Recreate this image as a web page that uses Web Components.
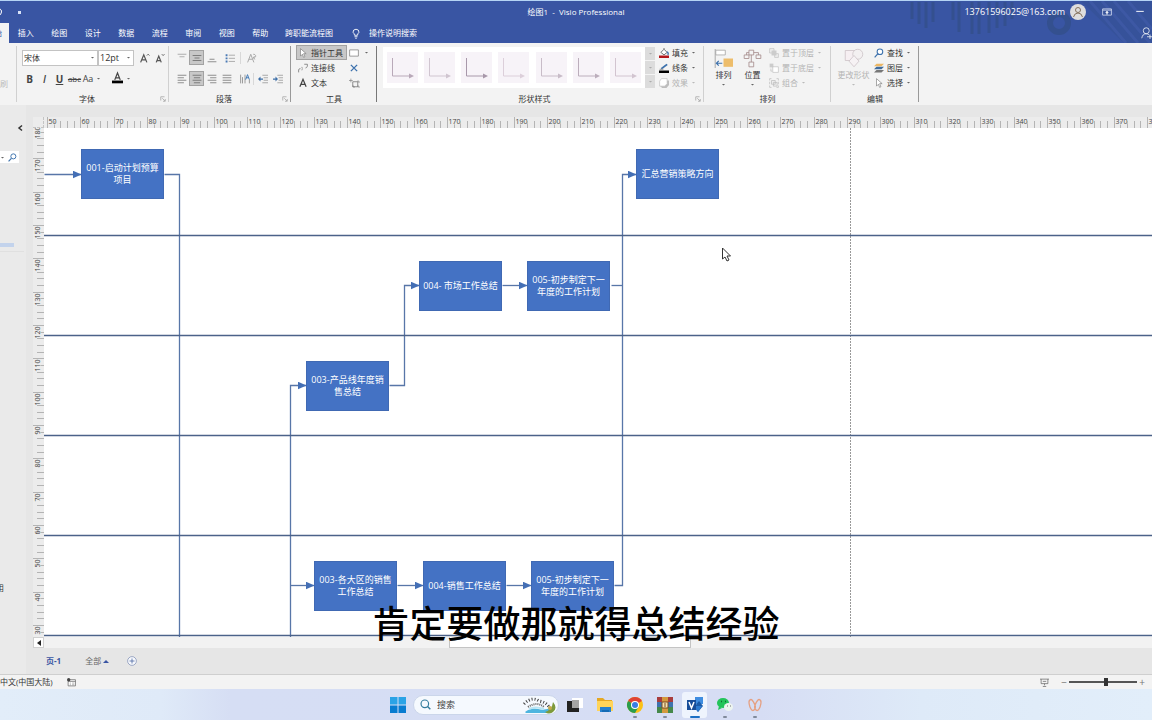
<!DOCTYPE html>
<html lang="zh-CN">
<head>
<meta charset="utf-8">
<title>绘图1 - Visio Professional</title>
<style>
  html, body { margin: 0; height: 100%; overflow: hidden; }
  body {
    font-family: "Open Sans", "Noto Sans CJK SC", sans-serif;
    font-size: 8px;
    line-height: 12px;
    color: #333;
    background: #e6e6e6;
  }
</style>
</head>
<body>
<visio-app></visio-app>

<script>
// ------------------------------------------------------------
// Icons, all drawn on a 16x16 grid
// ------------------------------------------------------------
const ICONS = {
  caret: '<path d="M3 6h10l-5 5z" fill="#666"/>',
  launcher: '<path d="M2 12V2h10M6 6l7 7M14 8v6H8" fill="none" stroke="#888" stroke-width="1.5"/>',
  growA: '<path d="M1 15L6 3l5 12M3 11h6" fill="none" stroke="#555" stroke-width="2"/><path d="M11 4l2-2 2 2" fill="none" stroke="#444" stroke-width="1.4"/>',
  shrinkA: '<path d="M2 15L6 5l4 10M3 12h6" fill="none" stroke="#555" stroke-width="2"/><path d="M11 2l2 2 2-2" fill="none" stroke="#444" stroke-width="1.4"/>',
  fontColor: '<path d="M4 10L8 0l4 10M5 7h6" fill="none" stroke="#444" stroke-width="1.800"/><path d="M0 11h16v4H0z" fill="#000"/>',
  top: '<path d="M1 2h14M4 6h8" stroke="#aaa" stroke-width="1.5"/>',
  middle: '<path d="M1 4h14M4 8h8M1 12h14" stroke="#777" stroke-width="1.5"/>',
  bottom: '<path d="M4 10h8M1 14h14" stroke="#888" stroke-width="1.5"/>',
  bullets: '<path d="M1 2h3v3H1zM1 7h3v3H1zM1 12h3v3H1z" fill="#4a7ab5"/><path d="M6 3.500h10M6 8.500h10M6 13.500h10" stroke="#aaa" stroke-width="1.500"/>',
  rotateA: '<path d="M1 15L6 2l5 13M3 10h6" fill="none" stroke="#aaa" stroke-width="1.600"/><path d="M10 2c5 0 5 5 1 6M12 5l-2 3 3 2" fill="none" stroke="#999" stroke-width="1.300"/>',
  alignLeft: '<path d="M1 2h14M1 6h10M1 10h14M1 14h10" stroke="#888" stroke-width="1.500"/>',
  alignCenter: '<path d="M1 2h14M3 6h10M1 10h14M3 14h10" stroke="#777" stroke-width="1.500"/>',
  alignRight: '<path d="M1 2h14M5 6h10M1 10h14M5 14h10" stroke="#888" stroke-width="1.500"/>',
  justify: '<path d="M1 2h14M1 6h14M1 10h14M1 14h14" stroke="#888" stroke-width="1.500"/>',
  vertical: '<path d="M1 1v14M4 5v10M8 1v14M15 9v6" stroke="#888" stroke-width="1.300"/><path d="M9 9l3-8 3 8M10 6h4" fill="none" stroke="#3f77b5" stroke-width="1.500"/>',
  outdent: '<path d="M7 2h9M9 6h7M9 10h7M7 14h9" stroke="#999" stroke-width="1.300"/><path d="M0 8l4-4v3h4v2H4v3z" fill="#3d6fa8"/>',
  indent: '<path d="M7 2h9M9 6h7M9 10h7M7 14h9" stroke="#999" stroke-width="1.300"/><path d="M8 8L4 4v3H0v2h4v3z" fill="#3d6fa8"/>',
  pointer: '<path d="M4 1v12l3-3 2 5 2-1-2-5h4z" fill="#fff" stroke="#777"/>',
  connector: '<path d="M1 15v-4q0-2 3-2M10 2h5v3q-1 3-3 3" fill="none" stroke="#777" stroke-width="1.300"/><path d="M5 7h2v4H5" fill="none" stroke="#999"/>',
  text: '<path d="M3 14L8 2l5 12M5 10h6" fill="none" stroke="#444" stroke-width="2"/>',
  rect: '<path d="M1 3h14v10H1z" fill="#fff" stroke="#888" stroke-width="1.300"/>',
  cross: '<path d="M3 3l10 10M13 3L3 13" stroke="#3d72ad" stroke-width="2.200"/>',
  point: '<path d="M6 6h8v8H6z" fill="none" stroke="#777" stroke-width="1.300"/><path d="M3 1v6M0 4h6M5 13h3v3M13 5h3v3M13 13h3v3" fill="none" stroke="#777"/>',
  fill: '<path d="M3 7l5-5 5 5-5 4zM8 2V0" fill="#fff" stroke="#555" stroke-width="1.300"/><path d="M13 6q3 3 1 5" stroke="#3d72ad" stroke-width="2" fill="none"/><path d="M0 12h16v4H0z" fill="#b3161b"/>',
  line: '<path d="M3 10l1-3 8-6 2 2-8 6z" fill="#3d72ad"/><path d="M1 10h6" stroke="#555"/><path d="M0 12h16v4H0z" fill="#000"/>',
  effect: '<path d="M6 4h10v7l-4 5H5l-3-3z" fill="#bdbdbd"/><path d="M4 1h9v8l-4 4H1V5z" fill="#fff" stroke="#bbb"/>',
  front: '<path d="M1 1h7v7H1zM9 9h6v6H9z" fill="#eee" stroke="#bbb"/><path d="M4 4h8v8H4z" fill="#ccc"/>',
  back: '<path d="M1 1h6v6H1z" fill="#ccc"/><path d="M6 6h9v9H6z" fill="#fff" stroke="#bbb"/><path d="M3 9v4h2" fill="none" stroke="#bbb"/>',
  group: '<path d="M4 4h6v6H4zM7 7h6v6H7z" fill="#eee" stroke="#b5b5b5"/><path d="M1 4V1h3M12 1h3v3M15 12v3h-3M4 15H1v-3M1 6v4M15 6v4" fill="none" stroke="#b5b5b5"/>',
  find: '<circle cx="9.500" cy="6" r="4.500" fill="#fff" stroke="#3d72ad" stroke-width="1.700"/><path d="M6 9.500L1 15" stroke="#3d72ad" stroke-width="2"/>',
  layer: '<path d="M4 1h12l-4 4H0z" fill="#ecb765"/><path d="M4 6h12l-4 4H0z" fill="#3f6b9d"/><path d="M4 11h12l-4 4H0z" fill="#777"/>',
  bigArrange: '<path d="M1 0v16" stroke="#999" stroke-width=".7"/><path d="M1.500 1h8v4h-8z" fill="#fff" stroke="#999" stroke-width=".6"/><path d="M8 8h8v7H8z" fill="#edbd6b"/><path d="M7 12H2m2-2l-2 2 2 2" fill="none" stroke="#3d72ad"/>',
  bigPosition: '<path d="M5 1h4v4H5zM11 5h4v3h-4zM1 5h4v3H1zM5 11h4v4H5zM9 3h4v2M7 5v6M3 5V3h2" fill="none" stroke="#a58c8c" stroke-width=".7"/>',
  bigShape: '<path d="M1 2h8v8H1z" fill="#f6eff2" stroke="#c9bfc4" stroke-width=".6"/><circle cx="11" cy="5" r="4" fill="#f3f0f1" stroke="#c9c0c4" stroke-width=".6"/><path d="M8 6l4 4.500L8 15l-4-4.500z" fill="#f6f2f4" stroke="#c9bfc4" stroke-width=".6"/>',
  bulb: '<path d="M6 11q0-2-2-4a4 4 0 1 1 8 0q-2 2-2 4zM6 13h4M7 15h2" fill="none" stroke="#fff" stroke-width="1.200"/>',
  undo: '<path d="M3 2h6M3 2v5M3 5q9-5 9 3 0 5-6 6" fill="none" stroke="#fff" stroke-width="1.600"/>',
  user: '<circle cx="8" cy="8" r="8" fill="#dedede"/><circle cx="8" cy="6" r="2.500" fill="none" stroke="#85725d"/><path d="M3.500 13q1-4 4.500-4t4.500 4" fill="none" stroke="#85725d"/>',
  display: '<path d="M1 3h14v10H1zM1 5h14" fill="none" stroke="#dfe6f7" stroke-width="1.200"/><path d="M8 6l3 3H9v3H7V9H5z" fill="#fff"/>',
  minimize: '<path d="M2 7h12" stroke="#fff" stroke-width="1.500"/>',
  share: '<circle cx="7" cy="5" r="4" fill="none" stroke="#fff"/><path d="M1 15q1-6 6-6 3 0 4 2M8 13h7M12 10v6" fill="none" stroke="#fff"/>',
  collapse: '<path d="M12 3L6 8l6 5" fill="none" stroke="#333" stroke-width="3"/>',
  addPage: '<circle cx="8" cy="8" r="7" fill="#f6f8fc" stroke="#6d7fab"/><path d="M8 4v8M4 8h8" stroke="#46609f" stroke-width="1.200"/>',
  macro: '<path d="M2 3h13v11H2zM2 6h13" fill="#fff" stroke="#666" stroke-width="1.300"/><path d="M5 9h2M9 9h4M5 12h2M9 12h4" stroke="#777"/><circle cx="3" cy="3" r="3" fill="#444"/>',
  present: '<path d="M0 2h16M2 2v8h12V2M5 6h6M8 10v3M5 15h6" fill="none" stroke="#666" stroke-width="1.300"/>',
  // task bar
  windows: '<path d="M0 0h7.500v7.500H0zM8.500 0H16v7.500H8.500z" fill="#2ba3e6"/><path d="M0 8.500h7.500V16H0zM8.500 8.500H16V16H8.500z" fill="#087cd0"/>',
  taskview: '<path d="M5 1h11v10H5z" fill="#fff"/><path d="M0 4h12v11H0z" fill="#222"/><path d="M5 3h7v8H5z" fill="#a5a5a5"/>',
  folder: '<path d="M0 1h6l2 2h7v11H0z" fill="#e5a823"/><path d="M0 4h16v10H0z" fill="#ffd45a"/><path d="M3 10h11v5H3z" fill="#2480cf"/><path d="M5 13h7v2H5z" fill="#146bb5"/>',
  chrome: '<circle cx="8" cy="8" r="8" fill="#fbc116"/><path d="M8 8L1.070 4A8 8 0 0 1 14.930 4z" fill="#df4335"/><path d="M8 8l-6.930-4A8 8 0 0 0 8 16l3.500-6z" fill="#2a9d4d"/><circle cx="8" cy="8" r="4" fill="#fff"/><circle cx="8" cy="8" r="3" fill="#397de4"/>',
  rar: '<path d="M0 0h16v5H0z" fill="#a83d3d"/><path d="M0 5h16v5H0z" fill="#3e72ae"/><path d="M0 10h16v6H0z" fill="#45884a"/><path d="M5 0h6v16H5z" fill="#d39a3e"/><path d="M5 5h6v6H5z" fill="#f4e2ac" stroke="#7a4b23"/><path d="M8 6v4" stroke="#7a4b23"/>',
  visio: '<path d="M8 0h8v7H8z" fill="#3f8de0"/><path d="M12 4l4 5-5 6-4-5z" fill="#195aa8"/><path d="M7 9h8l-4 6z" fill="#2b79cf"/><path d="M0 3h9v10H0z" fill="#174d98"/><path d="M2 5l2.500 6L7 5" fill="none" stroke="#fff" stroke-width="1.500"/>',
  wechat: '<ellipse cx="6" cy="6" rx="6" ry="5" fill="#23c45a"/><path d="M2 9l-1 4 4-2z" fill="#23c45a"/><ellipse cx="11.500" cy="10" rx="4.500" ry="4" fill="#edf5f0"/><path d="M4 4.500h1M8 4.500h1" stroke="#126a32" stroke-width="1.400"/><path d="M10 9h1M13 9h1" stroke="#777"/>',
  wings: '<path d="M8 8Q5 1 3 3q-2 1 0 7 2 5 4 3 2-2 1-5Q11 1 13 3q2 1 0 7-2 5-4 3-2-2-1-5z" fill="none" stroke="#e5a184" stroke-width="1.400"/>',
  lens: '<circle cx="7" cy="7" r="5.500" fill="none" stroke="#337c9c" stroke-width="1.700"/><path d="M11 11l4 4" stroke="#337c9c" stroke-width="2"/>'
};

// Base class: attaches an open shadow root and fills it once connected
class BaseElement extends HTMLElement {
  constructor() {
    super();
    this.attachShadow({ mode: 'open' });
  }
  connectedCallback() {
    this.shadowRoot.innerHTML = `
      <style>
        *, *::before, *::after { box-sizing: border-box; }
        button, input, select { font: inherit; color: inherit; margin: 0; padding: 0; border: 0; background: none; }
      </style>${this.render()}`;
  }
  render() { return ''; }
}

// <app-icon name size>
class AppIcon extends BaseElement {
  render() {
    const size = this.getAttribute('size') || 10;
    return `
      <style>
        :host { display: inline-flex; flex: none; }
        svg { display: block; overflow: visible; }
      </style>
      <svg width="${size}" height="${size}" viewBox="0 0 16 16" aria-hidden="true">${ICONS[this.getAttribute('name')]}</svg>`;
  }
}

// <tool-button icon label size big caret active muted>
class ToolButton extends BaseElement {
  render() {
    const icon = this.getAttribute('icon');
    const label = this.getAttribute('label') || '';
    const title = this.getAttribute('title') || label;
    return `
      <style>
        :host { display: block; flex: none; height: 15px; }
        :host([big]) { height: 45px; }
        button {
          display: flex; align-items: center; justify-content: center; gap: 3px;
          width: 100%; height: 100%; white-space: nowrap;
        }
        :host([start]) button { justify-content: flex-start; padding-left: 2px; }
        :host([big]) button { flex-direction: column; gap: 1px; }
        :host([active]) button { background: #c8c8c8; outline: 1px solid #a2a2a2; outline-offset: -1px; }
        :host([muted]) { color: #b4b4b4; }
        :host([muted]) .caret { opacity: .4; }
      </style>
      <button type="button" aria-label="${title}">
        ${icon ? `<app-icon name="${icon}" size="${this.getAttribute('size') || 10}"></app-icon>` : ''}
        ${label ? `<span>${label}</span>` : ''}
        <slot></slot>
        ${this.hasAttribute('caret') ? '<app-icon class="caret" name="caret" size="5"></app-icon>' : ''}
      </button>`;
  }
}

// Title bar with document name and account
class TitleBar extends BaseElement {
  render() {
    let bars = '';
    [[912, 17], [919, 22], [926, 26], [933, 20], [953, 18], [959, 30], [972, 32], [979, 32], [989, 31], [997, 26], [1005, 24], [1012, 17]]
      .forEach(([x, h]) => { bars += `<path d="M${x - 900} 1v${h}"/>`; });
    return `
      <style>
        :host {
          display: grid; grid-template-columns: 1fr auto 1fr; align-items: center;
          position: relative; height: 23px; flex: none;
          color: #fff; border-top: 1px solid #b5d4f5;
        }
        .art { position: absolute; right: 0; top: 0; }
        .left, .right { display: flex; align-items: center; position: relative; }
        .left { gap: 14px; margin-left: -6px; }
        .left i { width: 3px; height: 3px; background: #d8e2f8; }
        .name { white-space: pre; position: relative; }
        .right { justify-content: flex-end; }
        .mail { font-size: 9px; margin-right: 5px; }
        button { display: flex; padding: 0 7px; }
        .shown { margin: 0 9px; }
      </style>
      <svg class="art" width="252" height="42" aria-hidden="true">
        <g stroke="#34508f" stroke-width="3">${bars}</g>
        <circle cx="159" cy="22" r="9" fill="none" stroke="#34508f" stroke-width="6"/>
        <path d="M181 0h71v42h-28z" fill="#36529a"/>
        <path d="M190 0l36 42M202 0l36 42M214 0l36 42M228 0l24 28" stroke="#3d58a4" stroke-width="3"/>
      </svg>
      <div class="left"><app-icon name="undo"></app-icon><i></i></div>
      <div class="name">绘图1  -  Visio Professional</div>
      <div class="right">
        <span class="mail">13761596025@163.com</span>
        <app-icon name="user" size="16"></app-icon>
        <button class="shown" type="button" aria-label="功能区显示选项"><app-icon name="display"></app-icon></button>
        <button type="button" aria-label="最小化"><app-icon name="minimize"></app-icon></button>
      </div>`;
  }
}

// Ribbon tab strip
class RibbonTabs extends BaseElement {
  render() {
    const tabs = ['插入', '绘图', '设计', '数据', '流程', '审阅', '视图', '帮助'];
    return `
      <style>
        :host { display: flex; height: 20px; flex: none; color: #fff; position: relative; }
        button { height: 20px; white-space: nowrap; }
        .home {
          width: 9px; display: flex; align-items: center; justify-content: flex-end; padding-right: 7px;
          background: #f3f3f3; color: #3955a3; overflow: hidden;
        }
        .tabs { display: flex; width: 268px; }
        .tabs button { flex: 1; }
        .context { margin-left: 8px; }
        .tell { display: flex; align-items: center; gap: 7px; margin-left: 17px; }
        .share { margin-left: auto; width: 11px; overflow: hidden; }
        .share app-icon { display: flex; }
      </style>
      <button class="home" type="button" aria-label="开始">始</button>
      <nav class="tabs">${tabs.map(t => `<button type="button">${t}</button>`).join('')}</nav>
      <button class="context" type="button">跨职能流程图</button>
      <button class="tell" type="button"><app-icon name="bulb" size="12"></app-icon>操作说明搜索</button>
      <button class="share" type="button" aria-label="共享"><app-icon name="share" size="12"></app-icon></button>`;
  }
}

// <ribbon-group label launcher> : boxed section of the ribbon
class RibbonGroup extends BaseElement {
  render() {
    return `
      <style>
        :host { display: flex; flex-direction: column; flex: none; position: relative; padding-top: 2px; width: var(--w); }
        :host::after {
          content: ""; position: absolute; right: 0; top: 3px; bottom: 3px;
          border-right: 1px solid var(--rule, #d0d0d0);
        }
        .body { display: flex; height: 45px; }
        .foot { display: flex; align-items: center; height: 12px; margin-top: 3px; }
        .foot span { flex: 1; text-align: center; }
        .foot app-icon { width: 9px; margin-left: 3px; }
      </style>
      <div class="body"><slot></slot></div>
      <div class="foot">
        <span>${this.getAttribute('label') || ''}</span>
        ${this.hasAttribute('launcher') ? '<app-icon name="launcher" size="6"></app-icon>' : ''}
      </div>`;
  }
}

// Gallery of shape style previews
class StyleGallery extends BaseElement {
  render() {
    const strokes = ['#b9a9b9', '#d0c5d0', '#a898aa', '#dccfda', '#c8bcc8', '#bcaebc', '#d2c4d0'];
    return `
      <style>
        :host { display: flex; height: 41px; margin: 2px 0 0 6px; flex: none; }
        .tiles { display: flex; justify-content: space-between; align-items: center; width: 262px; padding: 0 4px; background: #fff; }
        .tiles button { width: 31px; height: 31px; background: #f7f3f8; }
        svg { display: block; }
        .scroll { display: flex; flex-direction: column; gap: 1px; width: 10px; background: #f3f3f3; }
        .scroll button { flex: 1; display: flex; align-items: center; justify-content: center; background: #dcdcdc; }
        .scroll app-icon { opacity: .4; }
      </style>
      <div class="tiles">
        ${strokes.map((c, i) => `
          <button type="button" aria-label="样式 ${i + 1}">
            <svg width="31" height="31"><path d="M5.500 6v18H23" fill="none" stroke="${c}"/><path d="M22 21.500l5 2.500-5 2.500z" fill="${c}"/></svg>
          </button>`).join('')}
      </div>
      <div class="scroll">
        <button type="button" aria-label="上一行"><app-icon name="caret" size="5"></app-icon></button>
        <button type="button" aria-label="下一行"><app-icon name="caret" size="5"></app-icon></button>
        <button type="button" aria-label="更多"><app-icon name="caret" size="5"></app-icon></button>
      </div>`;
  }
}

class RibbonBar extends BaseElement {
  render() {
    return `
      <style>
        :host { display: flex; height: 62px; flex: none; background: #f3f3f3; }
        .col { display: flex; flex-direction: column; }
        .row { display: flex; align-items: center; height: 15px; }
        .two { justify-content: space-between; height: 36px; margin-top: 5px; }
        .combo { position: relative; display: flex; align-items: center; height: 16px; background: #fff; border: 1px solid #c3c3c3; }
        .combo select { appearance: none; width: 100%; height: 14px; padding-left: 1px; outline: 0; }
        .combo app-icon { position: absolute; right: 2px; pointer-events: none; }
        .family { width: 76px; }
        .size { width: 36px; font-size: 9px; margin-right: 3px; }
        .w12 { width: 12px; } .w15 { width: 15px; } .w20 { width: 20px; }
        .w30 { width: 29px; } .w37 { width: 37px; } .w50 { width: 51px; }
        .gap { width: 3px; }
        b, i, u, s, em { font-size: 10px; color: #444; }
        b, u { font-weight: 700; }
        i { font-weight: 600; }
        s { font-size: 8px; }
        em { font-style: normal; font-size: 9px; }
        .bar { width: 1px; height: 12px; background: #d8d8d8; margin: 0 3px; }
        .thin { margin: 0 1px; }
        .clip { width: 8px; overflow: hidden; color: #bbb; padding-top: 33px; }
      </style>
      <ribbon-group style="--w: 17px"><div class="clip">刷</div></ribbon-group>

      <ribbon-group label="字体" launcher style="--w: 152px">
        <div class="col two" style="padding-left: 5px">
          <div class="row">
            <label class="combo family"><select aria-label="字体"><option>宋体</option></select><app-icon name="caret" size="5"></app-icon></label>
            <label class="combo size"><select aria-label="字号"><option>12pt</option></select><app-icon name="caret" size="5"></app-icon></label>
            <tool-button class="w15" icon="growA" title="增大字号"></tool-button>
            <tool-button class="w15" icon="shrinkA" title="减小字号"></tool-button>
          </div>
          <div class="row">
            <tool-button class="w15" title="加粗"><b>B</b></tool-button>
            <tool-button class="w15" title="倾斜"><i>I</i></tool-button>
            <tool-button class="w15" title="下划线"><u>U</u></tool-button>
            <tool-button class="w15" title="删除线"><s>abc</s></tool-button>
            <tool-button class="w20" title="更改大小写" caret><em>Aa</em></tool-button>
            <span class="gap"></span><span class="gap"></span><span class="gap"></span>
            <tool-button class="w20" icon="fontColor" size="11" title="字体颜色" caret></tool-button>
          </div>
        </div>
      </ribbon-group>

      <ribbon-group label="段落" launcher style="--w: 122px; --rule: #999">
        <div class="col two" style="padding-left: 5px">
          <div class="row">
            <tool-button class="w15" icon="top" title="顶端对齐"></tool-button>
            <tool-button class="w15" icon="middle" title="中部对齐" active></tool-button>
            <tool-button class="w15" icon="bottom" title="底端对齐"></tool-button>
            <span class="gap"></span>
            <tool-button class="w15" icon="bullets" title="项目符号"></tool-button>
            <span class="bar"></span>
            <tool-button class="w15" icon="rotateA" title="旋转文本"></tool-button>
          </div>
          <div class="row">
            <tool-button class="w15" icon="alignLeft" title="左对齐"></tool-button>
            <tool-button class="w15" icon="alignCenter" title="居中" active></tool-button>
            <tool-button class="w15" icon="alignRight" title="右对齐"></tool-button>
            <tool-button class="w15" icon="justify" title="两端对齐"></tool-button>
            <span class="gap"></span>
            <tool-button class="w15" icon="vertical" title="文字方向"></tool-button>
            <span class="bar thin"></span>
            <tool-button class="w15" icon="outdent" title="减少缩进量"></tool-button>
            <tool-button class="w15" icon="indent" title="增加缩进量"></tool-button>
          </div>
        </div>
      </ribbon-group>

      <ribbon-group label="工具" style="--w: 86px; --rule: #777">
        <div class="col w50" style="margin-left: 5px">
          <tool-button start icon="pointer" label="指针工具" active></tool-button>
          <tool-button start icon="connector" label="连接线"></tool-button>
          <tool-button start icon="text" label="文本"></tool-button>
        </div>
        <div class="col" style="padding-left: 1px">
          <div class="row">
            <tool-button class="w12" icon="rect" title="矩形"></tool-button>
            <tool-button class="w12" title="更多形状" caret></tool-button>
          </div>
          <tool-button class="w12" icon="cross" title="连接点"></tool-button>
          <tool-button class="w12" icon="point" title="文本块"></tool-button>
        </div>
      </ribbon-group>

      <ribbon-group label="形状样式" launcher style="--w: 327px">
        <style-gallery></style-gallery>
        <div class="col" style="padding-left: 2px">
          <tool-button start icon="fill" label="填充" caret></tool-button>
          <tool-button start icon="line" label="线条" caret></tool-button>
          <tool-button start icon="effect" label="效果" caret muted></tool-button>
        </div>
      </ribbon-group>

      <ribbon-group label="排列" style="--w: 127px">
        <tool-button class="w30" style="margin-left: 5px" big icon="bigArrange" size="19" label="排列" caret></tool-button>
        <tool-button class="w30" big icon="bigPosition" size="19" label="位置" caret></tool-button>
        <div class="col">
          <tool-button start muted icon="front" label="置于顶层" caret></tool-button>
          <tool-button start muted icon="back" label="置于底层" caret></tool-button>
          <tool-button start muted icon="group" label="组合" caret></tool-button>
        </div>
      </ribbon-group>

      <ribbon-group label="编辑" style="--w: 88px; --rule: #999">
        <tool-button class="w37" style="margin-left: 4px" big muted icon="bigShape" size="20" label="更改形状" caret></tool-button>
        <div class="col">
          <tool-button start icon="find" label="查找" caret></tool-button>
          <tool-button start icon="layer" label="图层" caret></tool-button>
          <tool-button start icon="pointer" label="选择" caret></tool-button>
        </div>
      </ribbon-group>`;
  }
}

// <ruler-strip from origin [vertical]> : a tick every 2 units, a number every 10
class RulerStrip extends BaseElement {
  render() {
    const vertical = this.hasAttribute('vertical');
    const from = Number(this.getAttribute('from'));
    const origin = Number(this.getAttribute('origin'));
    const step = 100 / 15;
    const length = vertical ? window.innerHeight : window.innerWidth - 44;
    let ticks = '';
    let labels = '';
    for (let i = 0; origin + i * step < length; i++) {
      const p = Math.round(origin + i * step) + 0.5;
      const long = i % 5 === 0;
      const start = long ? 0 : 4;
      ticks += vertical ? `M${start} ${p}H11` : `M${p} ${start}V11`;
      if (!long) continue;
      const n = vertical ? from - i * 2 : from + i * 2;
      if (vertical && n < 30) break;
      labels += vertical
        ? `<text transform="translate(7 ${p + (n > 99 ? 13 : 9)}) rotate(-90)">${n}</text>`
        : `<text x="${p + 1}" y="7">${n}</text>`;
    }
    return `
      <style>
        :host { display: block; overflow: hidden; background: #ececec; }
        svg { display: block; width: 100%; height: 100%; }
        path { stroke: #b4b4b4; fill: none; }
        text { font-size: 7px; fill: #444; paint-order: stroke; stroke: #ececec; stroke-width: 1px; }
      </style>
      <svg aria-hidden="true"><path d="${ticks}"/>${labels}</svg>`;
  }
}

// <flow-node> : process box, text comes in through the slot
class FlowNode extends BaseElement {
  render() {
    return `
      <style>
        :host {
          position: absolute; display: flex; align-items: center; justify-content: center;
          width: 83px; height: 50px; box-sizing: border-box;
          background: #4472c4; border: 1px solid #4069b3; color: #fff;
          font-size: 9px; line-height: 12px; text-align: center; white-space: nowrap;
        }
      </style>
      <span><slot></slot></span>`;
  }
}

class FlowCanvas extends BaseElement {
  render() {
    const lanes = [107, 207, 307, 407, 507];
    // Connectors: path and whether it ends with an arrow head
    const links = [
      ['M0 46H37', 1], ['M120 46H135V509', 0],
      ['M246 509V257H262', 1], ['M246 457H270', 1],
      ['M345 257H360V157H375', 1], ['M458 157H483', 1],
      ['M353 457H379', 1], ['M462 457H487', 1],
      ['M567 157H578', 0], ['M570 457H578V46H592', 1]
    ];
    const nodes = [
      [37, 21, '001-启动计划预算<br>项目'],
      [592, 21, '汇总营销策略方向'],
      [375, 133, '004- 市场工作总结'],
      [483, 133, '005-初步制定下一<br>年度的工作计划'],
      [262, 233, '003-产品线年度销<br>售总结'],
      [270, 433, '003-各大区的销售<br>工作总结'],
      [379, 433, '004-销售工作总结'],
      [487, 433, '005-初步制定下一<br>年度的工作计划']
    ];
    return `
      <style>
        :host { display: block; position: relative; overflow: hidden; background: #fff; }
        svg { position: absolute; left: 0; top: 0; width: 100%; height: 100%; }
        .lane { stroke: #4b6289; stroke-width: 1.500; }
        .link { fill: none; stroke: #5876a8; stroke-width: 1.300; }
        .page { stroke: #999; stroke-dasharray: 2 1; }
      </style>
      <svg aria-hidden="true">
        <defs><marker id="head" markerUnits="userSpaceOnUse" markerWidth="9" markerHeight="8" refX="9" refY="4" orient="auto">
          <path d="M0 0l9 4-9 4z" fill="#446fb5"/></marker></defs>
        <path class="page" d="M806.500 0V509"/>
        ${links.map(([d, arrow]) => `<path class="link" d="${d}" ${arrow ? 'marker-end="url(#head)"' : ''} transform="translate(.5 .5)"/>`).join('')}
        ${lanes.map(y => `<line class="lane" x1="0" x2="100%" y1="${y + 0.5}" y2="${y + 0.5}"/>`).join('')}
        <path d="M678.500 120v11l2.500-2 2 4 2-1-2-4h3.500z" fill="#fff" stroke="#333"/>
      </svg>
      ${nodes.map(([x, y, t]) => `<flow-node style="left: ${x}px; top: ${y}px">${t}</flow-node>`).join('')}`;
  }
}

// Collapsed shapes pane on the left edge
class ShapesPane extends BaseElement {
  render() {
    return `
      <style>
        :host { display: flex; flex-direction: column; background: #eaeaea; overflow: hidden; }
        .fold { display: flex; align-self: flex-end; padding: 19px 2px 0 0; }
        .search { display: flex; align-items: center; gap: 3px; width: 19px; height: 12px; margin-top: 19px; background: #fff; }
        .picked { width: 14px; height: 4px; margin-top: 80px; background: #c3d3ec; }
        .rule { width: 24px; height: 1px; margin-top: 4px; background: #e0e0e0; }
        .hint { margin: auto 0 80px -4px; }
      </style>
      <button class="fold" type="button" aria-label="折叠"><app-icon name="collapse" size="8"></app-icon></button>
      <button class="search" type="button" aria-label="搜索形状"><app-icon name="caret" size="5"></app-icon><app-icon name="find" size="9"></app-icon></button>
      <div class="picked"></div>
      <div class="rule"></div>
      <div class="hint">用</div>`;
  }
}

// Drawing window: pane, rulers, canvas, scroll bar, page tabs
class DrawingWindow extends BaseElement {
  render() {
    return `
      <style>
        :host {
          display: grid; flex: 1; min-height: 0;
          grid-template-columns: 26px 7px 11px minmax(0, 1fr);
          grid-template-rows: 12px 11px minmax(0, 1fr) 11px 26px;
          background: #e6e6e6;
        }
        shapes-pane { grid-area: 1 / 1 / 6 / 2; }
        .corner { grid-area: 2 / 3; border: dashed #c4c4c4; border-width: 0 1px 1px 0; background: #ececec; }
        .top { grid-area: 2 / 4; }
        .side { grid-area: 3 / 3; }
        flow-canvas { grid-area: 3 / 4; }
        .back { grid-area: 4 / 3; background: #fff; border: 1px solid #d0d0d0; display: flex; align-items: center; justify-content: center; }
        .back::before { content: ""; border: solid transparent; border-width: 3px 4px 3px 0; border-right-color: #222; }
        .track { grid-area: 4 / 4; background: #f2f2f2; display: flex; justify-content: center; }
        .thumb { width: 242px; margin-right: 56px; background: #fff; border: 1px solid #c4c4c4; border-top: 0; }
        .pages { grid-area: 5 / 3 / 6 / 5; display: flex; align-items: center; padding-left: 13px; gap: 24px; }
        .pages button { display: flex; align-items: center; gap: 2px; white-space: nowrap; }
        .current { color: #3955a3; font-weight: 700; }
        .all::after { content: ""; border: solid transparent; border-width: 0 3px 3px; border-bottom-color: #3955a3; }
        .all { color: #666; }
        .pages .add { margin-left: -6px; }
      </style>
      <shapes-pane></shapes-pane>
      <div class="corner"></div>
      <ruler-strip class="top" from="50" origin="3"></ruler-strip>
      <ruler-strip class="side" vertical from="180" origin="-3"></ruler-strip>
      <flow-canvas></flow-canvas>
      <button class="back" type="button" aria-label="向左滚动"></button>
      <div class="track"><div class="thumb"></div></div>
      <nav class="pages">
        <button class="current" type="button">页-1</button>
        <button class="all" type="button">全部</button>
        <button class="add" type="button" aria-label="插入页"><app-icon name="addPage"></app-icon></button>
      </nav>`;
  }
}

class StatusBar extends BaseElement {
  render() {
    return `
      <style>
        :host { display: flex; align-items: center; height: 15px; flex: none; background: #f3f3f3; border-top: 1px solid #cfcfcf; }
        .macro { margin-left: 14px; }
        button { display: flex; }
        .zoom { display: flex; align-items: center; margin-left: auto; padding-right: 5px; }
        .zoom button { width: 10px; justify-content: center; color: #777; font-size: 10px; }
        .zoom .show { margin-right: 10px; }
        input { appearance: none; width: 68px; height: 12px; background: linear-gradient(#555, #555) center / 100% 2px no-repeat; }
        input::-webkit-slider-thumb { appearance: none; width: 4px; height: 8px; background: #333; }
      </style>
      <span>中文(中国大陆)</span>
      <button class="macro" type="button" aria-label="宏"><app-icon name="macro" size="9"></app-icon></button>
      <div class="zoom">
        <button class="show" type="button" aria-label="演示模式"><app-icon name="present" size="9"></app-icon></button>
        <button type="button" aria-label="缩小">−</button>
        <input type="range" min="0" max="100" value="54" aria-label="缩放">
        <button type="button" aria-label="放大">+</button>
      </div>`;
  }
}

class TaskBar extends BaseElement {
  render() {
    const apps = [['taskview', ''], ['folder', ''], ['chrome', 'open'], ['rar', 'open'], ['visio', 'open current'], ['wechat', 'open'], ['wings', 'open']];
    return `
      <style>
        :host {
          display: flex; justify-content: center; align-items: center; gap: 1px; height: 31px; flex: none;
          background: linear-gradient(90deg, #e2edf9 0, #dfeaf8 14%, #d6def4 20%, #d6ddf4 66%, #deeaf8 80%, #e2eefa 100%);
        }
        button { width: 29px; height: 26px; display: flex; justify-content: center; align-items: center; position: relative; }
        .search {
          display: flex; align-items: center; gap: 6px; width: 146px; height: 20px; padding: 0 2px 0 6px;
          background: #f5f9fe; border-radius: 10px; border: 1px solid #cbd6ea; overflow: hidden;
        }
        input { flex: 1; min-width: 0; font-size: 9px; outline: 0; }
        input::placeholder { color: #444; opacity: 1; }
        .open::after {
          content: ""; position: absolute; bottom: 0; left: 50%; width: 4px; height: 2px; margin-left: -2px;
          border-radius: 1px; background: #808a9b;
        }
        .current { width: 25px; margin: 0 2px; background: #eff4fd; border-radius: 3px; }
        .current::after { width: 10px; margin-left: -5px; background: #1c6fc4; }
      </style>
      <button type="button" aria-label="开始"><app-icon name="windows" size="16"></app-icon></button>
      <label class="search">
        <app-icon name="lens" size="11"></app-icon>
        <input type="text" placeholder="搜索" aria-label="搜索">
        <svg width="34" height="18" viewBox="0 0 34 18" aria-hidden="true">
          <path d="M3 16q6-5 13-3t14-2l-4 6H4z" fill="#4eb5df"/>
          <path d="M7 13q6-3 15 0" stroke="#b9e5f4" stroke-width="2" fill="none"/>
          <path d="M2 8q8-8 15-3 7 1 10 6" stroke="#444" stroke-width="3" stroke-dasharray="1 2" fill="none"/>
          <path d="M6 11q9-6 16 0" stroke="#666" stroke-width="2" stroke-dasharray="1 1" fill="none"/>
          <path d="M23 16q7-2 8-10 5 6 0 10-4 3-8 0z" fill="#7d9a3c"/>
          <circle cx="28" cy="12" r="2" fill="#c3a94e"/>
        </svg>
      </label>
      ${apps.map(([name, cls]) => `<button type="button" class="${cls}" aria-label="${name}"><app-icon name="${name}" size="16"></app-icon></button>`).join('')}`;
  }
}

// <video-caption> : subtitle line over the window
class VideoCaption extends BaseElement {
  render() {
    return `
      <style>
        :host {
          position: absolute; left: 0; right: 0; bottom: 74px; pointer-events: none;
          text-align: center; font: 500 37px/48px "Noto Sans CJK SC", sans-serif; color: #000;
        }
      </style>
      <slot></slot>`;
  }
}

class VisioApp extends BaseElement {
  render() {
    return `
      <style>
        :host { display: flex; flex-direction: column; height: 100vh; position: relative; }
        header { background: #3955a3; flex: none; }
      </style>
      <header>
        <title-bar></title-bar>
        <ribbon-tabs></ribbon-tabs>
      </header>
      <ribbon-bar></ribbon-bar>
      <drawing-window></drawing-window>
      <status-bar></status-bar>
      <task-bar></task-bar>
      <video-caption>肯定要做那就得总结经验</video-caption>`;
  }
}

customElements.define('app-icon', AppIcon);
customElements.define('tool-button', ToolButton);
customElements.define('title-bar', TitleBar);
customElements.define('ribbon-tabs', RibbonTabs);
customElements.define('ribbon-group', RibbonGroup);
customElements.define('style-gallery', StyleGallery);
customElements.define('ribbon-bar', RibbonBar);
customElements.define('ruler-strip', RulerStrip);
customElements.define('flow-node', FlowNode);
customElements.define('flow-canvas', FlowCanvas);
customElements.define('shapes-pane', ShapesPane);
customElements.define('drawing-window', DrawingWindow);
customElements.define('status-bar', StatusBar);
customElements.define('task-bar', TaskBar);
customElements.define('video-caption', VideoCaption);
customElements.define('visio-app', VisioApp);
</script>
</body>
</html>
